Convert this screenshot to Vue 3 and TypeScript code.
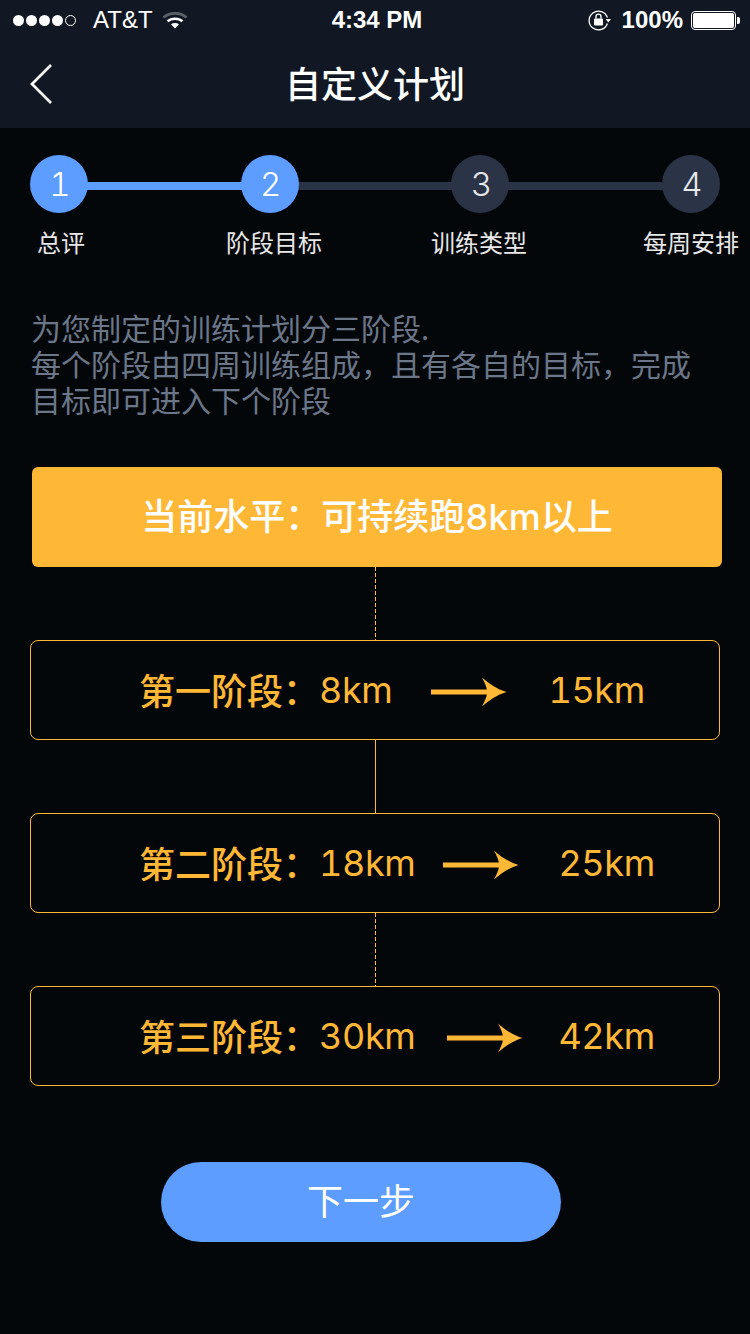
<script setup lang="ts">
const steps = [
  { num: 1, label: '总评', active: true },
  { num: 2, label: '阶段目标', active: true },
  { num: 3, label: '训练类型', active: false },
  { num: 4, label: '每周安排', active: false },
]

const stages = [
  { name: '第一阶段：', from: '8km', to: '15km', cls: 'stage-one', link: 'dashed' },
  { name: '第二阶段：', from: '18km', to: '25km', cls: 'stage-two', link: 'solid' },
  { name: '第三阶段：', from: '30km', to: '42km', cls: 'stage-three', link: 'dashed' },
]
</script>

<template>
  <div class="page">
    <header class="header">
      <div class="status">
        <div class="status-left">
          <span class="dots">
            <i v-for="n in 4" :key="n" class="dot"></i>
            <i class="dot empty"></i>
          </span>
          <span class="carrier">AT&amp;T</span>
          <svg class="wifi" width="26" height="20" viewBox="0 0 26 20">
            <path d="M1.5 7.5C7.5 2 18.5 2 24.5 7.5" fill="none" stroke="#5b6068" stroke-width="2.6" />
            <path d="M5.5 11.3C9.5 7.8 16.5 7.8 20.5 11.3" fill="none" stroke="#fff" stroke-width="2.6" />
            <path d="M9 14.2C11.2 12.6 14.8 12.6 17 14.2L13 18.6Z" fill="#fff" />
          </svg>
        </div>
        <div class="clock">4:34 PM</div>
        <div class="status-right">
          <svg class="lock" width="24" height="22" viewBox="0 0 24 22">
            <path d="M20.4 7.5A9.4 9.4 0 1 0 20.4 13.5" fill="none" stroke="#fff" stroke-width="1.3" />
            <path d="M18.6 9H24L21.3 12.4Z" fill="#fff" />
            <rect x="7" y="8.5" width="9" height="7" rx="1" fill="#fff" />
            <path d="M9 8.5V6.6A2.5 2.5 0 0 1 14 6.6V8.5" fill="none" stroke="#fff" stroke-width="1.4" />
          </svg>
          <span class="percent">100%</span>
          <span class="battery"><i></i></span>
          <span class="nub"></span>
        </div>
      </div>
      <div class="nav">
        <svg class="back" width="24" height="42" viewBox="0 0 24 42">
          <path d="M22 2L3 21L22 40" fill="none" stroke="#fff" stroke-width="2.7" />
        </svg>
        <h1>自定义计划</h1>
      </div>
    </header>

    <main class="body">
      <div class="stepper">
        <div class="track">
          <span class="seg on"></span>
          <span class="seg"></span>
          <span class="seg"></span>
        </div>
        <div v-for="s in steps" :key="s.num" class="step">
          <span class="circle" :class="{ on: s.active }">{{ s.num }}</span>
        </div>
      </div>
      <div class="labels">
        <span v-for="s in steps" :key="s.label">{{ s.label }}</span>
      </div>

      <p class="intro">为您制定的训练计划分三阶段.<br />每个阶段由四周训练组成，且有各自的目标，完成<br />目标即可进入下个阶段</p>

      <div class="level">当前水平：可持续跑8km以上</div>

      <template v-for="st in stages" :key="st.name">
        <div class="link" :class="st.link"></div>
        <div class="stage" :class="st.cls">
          <span class="name">{{ st.name }}</span>
          <span class="from">{{ st.from }}</span>
          <svg class="arrow" width="76" height="30" viewBox="0 0 76 30">
            <path d="M0 12.5H60V17.5H0Z" fill="#ffb736" />
            <path d="M51 0.5C58 7 66 12 75.5 15C66 18 58 23 51 29.5C54.5 23 56 19 56 15C56 11 54.5 7 51 0.5Z" fill="#ffb736" />
          </svg>
          <span class="to">{{ st.to }}</span>
        </div>
      </template>

      <button class="next" type="button">下一步</button>
    </main>
  </div>
</template>

<style scoped>
.page {
  width: 750px;
  height: 1334px;
  overflow: hidden;
  background: #04070a;
  font-family: Inter, "Noto Sans CJK SC", sans-serif;
  font-variant-numeric: tabular-nums;
  color: #fff;
}

.header {
  height: 128px;
  background: #111823;
}

.status {
  height: 40px;
  display: flex;
  align-items: center;
  justify-content: space-between;
  position: relative;
  padding: 0 10px 0 13px;
  font-family: "Liberation Sans", sans-serif;
  font-size: 24px;
}

.status-left,
.status-right {
  display: flex;
  align-items: center;
}

.dots {
  display: flex;
  gap: 2px;
}

.dot {
  width: 11px;
  height: 11px;
  border-radius: 50%;
  background: #fff;
}

.dot.empty {
  background: none;
  border: 1px solid #fff;
  box-sizing: border-box;
}

.carrier {
  margin-left: 17px;
}

.wifi {
  margin-left: 9px;
}

.clock {
  position: absolute;
  left: 4px;
  right: 0;
  text-align: center;
  font-weight: 700;
}

.percent {
  margin-left: 11px;
  font-weight: 700;
}

.lock {
  margin-top: 1px;
}

.battery {
  width: 45px;
  height: 19px;
  margin-left: 8px;
  border: 1px solid #fff;
  border-radius: 4px;
  box-sizing: border-box;
  padding: 1px;
  display: flex;
}

.battery i {
  flex: 1;
  background: #fff;
  border-radius: 2px;
}

.nub {
  width: 3px;
  height: 7px;
  margin-left: 1px;
  background: #fff;
  border-radius: 0 2px 2px 0;
}

.nav {
  height: 88px;
  display: flex;
  align-items: center;
  justify-content: center;
  position: relative;
}

.nav h1 {
  margin: 2px 0 0;
  font-size: 36px;
  line-height: 50px;
  font-weight: 500;
}

.back {
  position: absolute;
  left: 29px;
  top: 23px;
}

.body {
  padding: 27px 30px 0;
  display: flex;
  flex-direction: column;
}

.stepper {
  position: relative;
  display: flex;
  justify-content: space-between;
}

.track {
  position: absolute;
  left: 29px;
  right: 29px;
  top: 27px;
  height: 8px;
  display: flex;
}

.seg {
  flex: 1;
  background: #2b3446;
}

.seg.on {
  background: #5c9dff;
}

.circle {
  position: relative;
  width: 58px;
  height: 58px;
  padding-left: 2px;
  box-sizing: border-box;
  display: flex;
  align-items: center;
  justify-content: center;
  border-radius: 50%;
  background: #2b3446;
  font-size: 33px;
  font-weight: 300;
  color: #e6e8ec;
}

.circle.on {
  background: #5c9dff;
  color: #fff;
}

.labels {
  margin: 16px 0 0 7px;
  display: grid;
  grid-template-columns: 189px 205px 212px auto;
  font-size: 24px;
  line-height: 30px;
  white-space: nowrap;
  color: #e8e8e8;
}

.intro {
  margin: 52px 0 0 1px;
  font-size: 30px;
  line-height: 36px;
  color: #6b7789;
}

.level {
  margin: 48px -2px 0 2px;
  height: 100px;
  padding-bottom: 6px;
  box-sizing: border-box;
  display: flex;
  align-items: center;
  justify-content: center;
  background: #ffb736;
  border-radius: 6px;
  font-size: 36px;
  font-weight: 500;
}

.link {
  width: 1px;
  height: 73px;
  margin-left: 345px;
  background: #ffb736;
}

.link.dashed {
  background: repeating-linear-gradient(#ffb736 0 4px, transparent 4px 6px);
}

.stage {
  height: 100px;
  box-sizing: border-box;
  display: flex;
  align-items: center;
  padding: 0 0 3px 108px;
  border: 1px solid #ffb736;
  border-radius: 8px;
  font-size: 36px;
  font-weight: 400;
  white-space: nowrap;
  color: #ffb736;
}

.name {
  width: 180px;
  flex-shrink: 0;
  font-weight: 500;
}

.from,
.to {
  margin-top: 2px;
  letter-spacing: -0.4px;
}

.arrow {
  flex-shrink: 0;
  margin-top: 6px;
}

.stage-one .arrow {
  margin-left: 39px;
  margin-right: 41px;
}

.stage-two .arrow {
  margin-left: 28px;
  margin-right: 39px;
}

.stage-three .arrow {
  margin-left: 32px;
  margin-right: 35px;
}

.next {
  margin: 76px 0 0 131px;
  width: 400px;
  height: 80px;
  padding: 0 0 6px;
  border: none;
  border-radius: 40px;
  background: #5c9dff;
  color: #fff;
  font-family: inherit;
  font-size: 36px;
}
</style>

<style>
body {
  background: #04070a;
}
</style>
